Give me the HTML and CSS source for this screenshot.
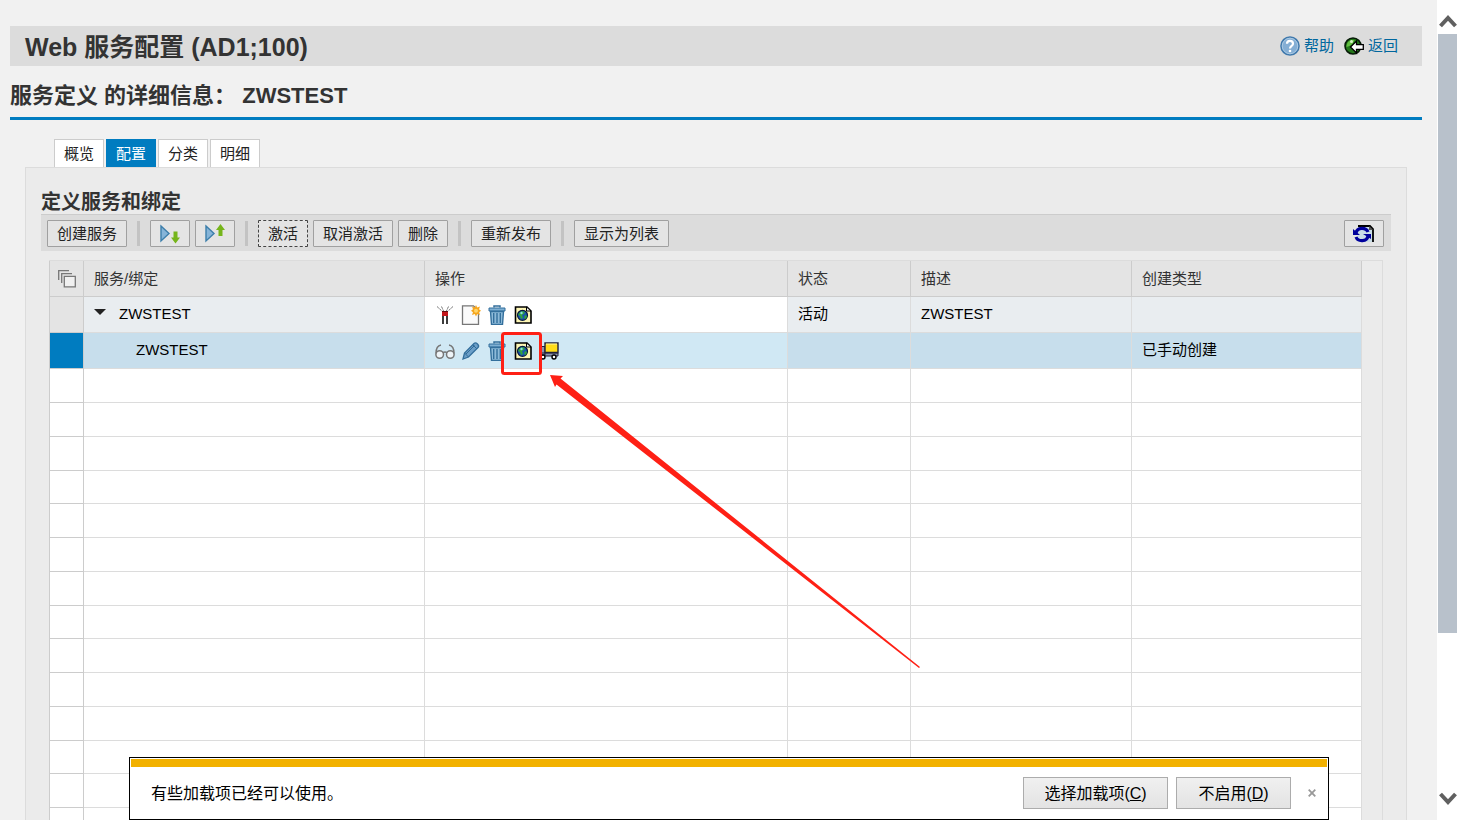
FILE: index.html
```html
<!DOCTYPE html>
<html lang="zh-CN">
<head>
    <meta charset="UTF-8">
    <meta name="viewport" content="width=device-width, initial-scale=1.0">
    <title>Web 服务配置</title>
    <link rel="stylesheet" href="styles.css">
</head>
<body>
    <!-- shared icons -->
    <svg class="icon-defs" aria-hidden="true">
        <symbol id="icon-trash" viewBox="0 0 18 20">
            <path d="M6 2.500V1h6v1.500" fill="none" stroke="#336f9c" stroke-width="1.500"/>
            <path d="M1 3h16v3H1z" fill="#7fb0d4" stroke="#336f9c"/>
            <path d="M2.500 6.500h13l-1 13h-11z" fill="#8dbad9" stroke="#336f9c" stroke-width="1.400"/>
            <path d="M5.700 8v10M9 8v10M12.300 8v10" stroke="#336f9c" stroke-width="1.400"/>
        </symbol>
        <symbol id="icon-globe" viewBox="0 0 18 18">
            <path d="M1.500 1h11.500l4 4v12H1.500z" fill="#fdf6b5" stroke="#000" stroke-width="1.600"/>
            <path d="M12.500 1v4h4.500z" fill="#fff" stroke="#000"/>
            <circle cx="8.500" cy="9.300" r="5" fill="#1756b0" stroke="#06183c" stroke-width="1.200"/>
            <path d="M5 7l3-2 3 1-1 2-2 1 1 3-2 1-1-3-2-1z" fill="#2fa13d"/>
            <path d="M11 9l2 1-1 3-2-1z" fill="#2fa13d"/>
            <circle cx="7.500" cy="7" r="1.200" fill="#8ce0e5"/>
        </symbol>
    </svg>

    <div class="window">
        <main class="page">
            <header class="title-bar">
                <h1>Web 服务配置 (AD1;100)</h1>
                <nav class="links">
                    <a href="#">
                        <svg width="20" height="20" viewBox="0 0 20 20">
                            <circle cx="10" cy="10" r="9" fill="#84aed4" stroke="#4079ac" stroke-width="1.600"/>
                            <circle cx="10" cy="10" r="7.800" fill="none" stroke="#b5d0e7" stroke-width=".8"/>
                            <path d="M7 7.700c0-3.800 6-3.800 6 0 0 2.300-3 2.200-3 4.800" fill="none" stroke="#fff" stroke-width="2.200"/>
                            <circle cx="10" cy="15" r="1.300" fill="#fff"/>
                        </svg>
                        帮助
                    </a>
                    <a href="#">
                        <svg width="20" height="18" viewBox="0 0 20 18">
                            <circle cx="9" cy="9" r="8" fill="#24781a" stroke="#071b08" stroke-width="1.600"/>
                            <path d="M2.500 10c0-5 3-7.500 8-7l-2 4-3 2z" fill="#62bd40"/>
                            <circle cx="7.500" cy="4.500" r="1.500" fill="#d9f5c8"/>
                            <path d="M6.500 10l6-6v3.700h6.800v4.600h-6.800V16z" fill="#fff" stroke="#000" stroke-width="1.300"/>
                        </svg>
                        返回
                    </a>
                </nav>
            </header>
            <h2 class="subtitle">服务定义 的详细信息： ZWSTEST</h2>

            <div class="tabs" role="tablist">
                <button class="tab" role="tab">概览</button>
                <button class="tab active" role="tab" aria-selected="true">配置</button>
                <button class="tab" role="tab">分类</button>
                <button class="tab" role="tab">明细</button>
            </div>

            <section class="panel">
                <h3>定义服务和绑定</h3>
                <div class="toolbar">
                    <button class="btn">创建服务</button>
                    <span class="sep"></span>
                    <button class="btn btn-icon" aria-label="展开">
                        <svg width="20" height="20" viewBox="0 0 20 20">
                            <path d="M1 2l8 7.500L1 17z" fill="#86b4d8" stroke="#3c7eab" stroke-width="1.400"/>
                            <path d="M13.500 7.500h4v6H20l-4.500 6-4.500-6h2.500z" fill="#76b51b"/>
                        </svg>
                    </button>
                    <button class="btn btn-icon" aria-label="折叠">
                        <svg width="20" height="20" viewBox="0 0 20 20">
                            <path d="M1 2l8 7.500L1 17z" fill="#86b4d8" stroke="#3c7eab" stroke-width="1.400"/>
                            <path d="M13.500 12h4V6H20l-4.500-6L11 6h2.500z" fill="#76b51b"/>
                        </svg>
                    </button>
                    <span class="sep"></span>
                    <button class="btn focused">激活</button>
                    <button class="btn">取消激活</button>
                    <button class="btn">删除</button>
                    <span class="sep"></span>
                    <button class="btn">重新发布</button>
                    <span class="sep"></span>
                    <button class="btn">显示为列表</button>
                    <button class="btn btn-icon refresh" aria-label="刷新">
                        <svg width="22" height="18" viewBox="0 0 22 18">
                            <path d="M5 1h12l4 4v12H5z" fill="#c9dde7"/>
                            <path d="M5 1h12l3 3v13" fill="none" stroke="#000" stroke-width="1.800"/>
                            <path d="M16 1l4 4h-4z" fill="#555"/>
                            <path d="M3 8c1-6 10-6 12-1M15 11c-1 6-10 6-12 1" fill="none" stroke="#00009c" stroke-width="3.200"/>
                            <path d="M0 4v6h7zM18 14V9h-8z" fill="#00009c"/>
                        </svg>
                    </button>
                </div>

                <div class="grid-wrap">
                    <table class="grid">
                        <colgroup>
                            <col class="col-select">
                            <col>
                            <col class="col-actions">
                            <col class="col-status">
                            <col class="col-desc">
                            <col class="col-type">
                        </colgroup>
                        <thead>
                            <tr>
                                <th class="select-all">
                                    <svg width="18" height="18" viewBox="0 0 18 18" fill="none" stroke="#777" stroke-width="1.300">
                                        <path d="M.7 10V.7H11M3.700 13V3.700H14"/>
                                        <path d="M6.300 6.300h11v10.500h-11z" fill="#f0f0f0"/>
                                    </svg>
                                </th>
                                <th>服务/绑定</th>
                                <th>操作</th>
                                <th>状态</th>
                                <th>描述</th>
                                <th>创建类型</th>
                            </tr>
                        </thead>
                        <tbody id="rows">
                            <tr class="parent">
                                <td></td>
                                <td><span class="caret"></span>ZWSTEST</td>
                                <td class="actions">
                                    <div class="icons">
                                        <svg height="20" viewBox="0 0 18 20" fill="none">
                                            <path d="M1 1.500l6 5.500M5.500 1.500L8 7M12.500 1.500L10 7M17 1.500L11 7" stroke="#777" stroke-dasharray="2.500 .7"/>
                                            <path d="M7 10v9M11 10v9" stroke="#333" stroke-width="1.900"/>
                                            <path d="M6 6.500h6V11H6z" fill="#c2161b"/>
                                            <path d="M6 6.500h6" stroke="#5c0d10"/>
                                        </svg>
                                        <svg height="20" viewBox="0 0 20 20">
                                            <path d="M1.500 .8h11l5 5v13.500h-16z" fill="#fafafa" stroke="#777" stroke-width="1.300"/>
                                            <path d="M15 0l1.200 2.500 2.800-1-1 2.800 2 1.500-2 1.400 1 2.800-2.800-1L15 11.500 13.800 9 11 10l1-2.800-2-1.400 2-1.500-1-2.800 2.800 1z" fill="#f7a61c"/>
                                            <circle cx="15" cy="5.700" r="2" fill="#ffd66b"/>
                                        </svg>
                                        <svg height="20"><use href="#icon-trash"/></svg>
                                        <svg height="18"><use href="#icon-globe"/></svg>
                                    </div>
                                </td>
                                <td>活动</td>
                                <td>ZWSTEST</td>
                                <td></td>
                            </tr>
                            <tr class="selected">
                                <td></td>
                                <td class="child">ZWSTEST</td>
                                <td class="actions">
                                    <div class="icons">
                                        <svg height="20" viewBox="0 0 20 20" fill="none" stroke="#777" stroke-width="1.500">
                                            <circle cx="4.700" cy="13.500" r="3.800" fill="#eef4f8"/>
                                            <circle cx="15.300" cy="13.500" r="3.800" fill="#eef4f8"/>
                                            <path d="M8 12c1-1.500 3-1.500 4 0M1 12.500C1 8 2.500 4.500 6 4M19 12.500C19 8 17.500 4.500 14 4"/>
                                        </svg>
                                        <svg height="20" viewBox="0 0 18 20">
                                            <path d="M1 18l1.500-6L12 2.500c2-2 6 2 4 4L6.500 16z" fill="#6c9fc8" stroke="#336f9c" stroke-width="1.300"/>
                                            <path d="M4 13L12.500 4.500M2.500 12l4 4M11 4l4 4" stroke="#2f6b97"/>
                                        </svg>
                                        <svg height="20"><use href="#icon-trash"/></svg>
                                        <svg height="18"><use href="#icon-globe"/></svg>
                                        <svg height="18" viewBox="0 0 20 18">
                                            <path d="M0 4.500h6V13H0zM0 11h19v3H0z" fill="#8c94ae" stroke="#22223a"/>
                                            <path d="M6 1h13v9.500H6z" fill="#ffdc18" stroke="#22223a" stroke-width="1.400"/>
                                            <path d="M7 2h11" stroke="#fff3a0"/>
                                            <circle cx="4" cy="15" r="2" fill="#fff" stroke="#000" stroke-width="1.400"/>
                                            <circle cx="15" cy="15" r="2" fill="#fff" stroke="#000" stroke-width="1.400"/>
                                        </svg>
                                    </div>
                                </td>
                                <td></td>
                                <td></td>
                                <td>已手动创建</td>
                            </tr>
                        </tbody>
                    </table>
                    <svg class="callout" width="420" height="340" viewBox="0 0 420 340">
                        <rect x="1.500" y="1.500" width="38" height="40" rx="2" fill="none" stroke="#fe2015" stroke-width="3"/>
                        <path d="M49 43l13 1-2.500 2.500L419 335l-1 1L55.500 52.500 54 55z" fill="#fe2015"/>
                    </svg>
                </div>
            </section>
        </main>

        <div class="scrollbar">
            <svg width="18" height="34" viewBox="0 0 18 34"><path d="M1.500 26L9 18l7.500 8" fill="none" stroke="#606060" stroke-width="4"/></svg>
            <div class="track"><div class="thumb"></div></div>
            <svg width="18" height="34" viewBox="0 0 18 34"><path d="M1.500 8L9 16l7.500-8" fill="none" stroke="#606060" stroke-width="4"/></svg>
        </div>
    </div>

    <div class="notice">
        <div class="notice-body">
            <p>有些加载项已经可以使用。</p>
            <button class="notice-btn wide">选择加载项(<u>C</u>)</button>
            <button class="notice-btn">不启用(<u>D</u>)</button>
            <button class="close" aria-label="关闭">
                <svg width="8" height="8" viewBox="0 0 8 8"><path d="M.7.7l6.600 6.600M7.300.7L.7 7.300" stroke="#999" stroke-width="1.800"/></svg>
            </button>
        </div>
    </div>

    <script>
        // fill the rest of the grid with empty rows
        let rows = document.getElementById('rows');
        for (let i = 0; i < 14; i++) {
            let tr = document.createElement('tr');
            tr.classList.add('empty');
            tr.innerHTML = '<td></td>'.repeat(6);
            rows.appendChild(tr);
        }
    </script>
</body>
</html>
```
FILE: styles.css
```css
* {
    box-sizing: border-box;
}
body {
    margin: 0;
    height: 100vh;
    overflow: hidden;
    background: #f1f1f1;
    color: #333;
    font-family: "Liberation Sans", Arial, "Noto Sans CJK SC", sans-serif;
    font-size: 15px;
}
button {
    font: inherit;
    color: #222;
    padding: 0;
    cursor: pointer;
}
svg {
    display: block;
    flex: none;
}
.icon-defs {
    position: absolute;
    width: 0;
    height: 0;
}
.window {
    display: flex;
    height: 100vh;
}
.page {
    flex: 1;
    min-width: 0;
    overflow: hidden;
    padding: 26px 15px 0 10px;
}

/* header */
.title-bar {
    display: flex;
    justify-content: space-between;
    align-items: center;
    height: 40px;
    padding: 0 24px 0 15px;
    background: #dcdcdc;
}
h1, h2, h3 {
    margin: 0;
    font-weight: bold;
    white-space: nowrap;
}
h1 {
    padding-top: 2px;
    font-size: 25px;
    line-height: 38px;
}
.links {
    display: flex;
    gap: 10px;
}
.links a {
    display: flex;
    align-items: center;
    gap: 4px;
    color: #00679e;
    text-decoration: none;
    line-height: 20px;
}
.subtitle {
    height: 54px;
    font-size: 22px;
    line-height: 60px;
    border-bottom: 3px solid #007cc0;
}

/* tabs */
.tabs {
    display: flex;
    gap: 2px;
    padding: 19px 0 0 44px;
}
.tab {
    width: 50px;
    height: 28px;
    padding-bottom: 2px;
    background: #fff;
    border: 1px solid #ccc;
    border-bottom: none;
}
.tab.active {
    background: #007cc0;
    border-color: #007cc0;
    color: #fff;
}
.panel {
    margin: 0 15px;
    padding: 22px 15px 0;
    background: #ebebeb;
    border: 1px solid #dcdcdc;
}
h3 {
    font-size: 20px;
    line-height: 24px;
}

/* toolbar */
.toolbar {
    display: flex;
    align-items: center;
    gap: 5px;
    height: 37px;
    padding: 1px 7px 0 6px;
    background: #dcdcdc;
    border-top: 1px solid #ccc;
}
.btn {
    height: 27px;
    padding: 0 9px;
    line-height: 25px;
    background: #e4e4e4;
    border: 1px solid #a0a0a0;
    border-radius: 1px;
    white-space: nowrap;
}
.btn-icon {
    display: flex;
    justify-content: center;
    align-items: center;
    width: 40px;
    padding: 0;
}
.btn.focused {
    border: 1px dashed #444;
}
.refresh {
    margin-left: auto;
}
.sep {
    width: 3px;
    height: 25px;
    margin: 0 5px;
    background: #c3c3c3;
}

/* grid */
.grid-wrap {
    position: relative;
    margin: 9px 8px 0;
    padding-right: 20px;
    border: 1px solid #dcdcdc;
    border-left: none;
}
.grid {
    width: 100%;
    table-layout: fixed;
    border-collapse: separate;
    border-spacing: 0;
    background: #fff;
    border-left: 1px solid #ccc;
}
.col-select { width: 34px; }
.col-actions { width: 363px; }
.col-status { width: 123px; }
.col-desc { width: 221px; }
.col-type { width: 230px; }
.grid th, .grid td {
    height: 36px;
    padding: 0 10px;
    border-right: 1px solid #dcdcdc;
    border-bottom: 1px solid #dcdcdc;
    text-align: left;
    line-height: 20px;
}
.grid th {
    font-weight: normal;
    background: #e4e4e4;
    border-color: #ccc;
}
.grid td:first-child {
    border-color: #ccc;
}
.grid th.select-all {
    padding: 0 8px;
}
.grid td {
    padding-bottom: 2px;
    color: #000;
}
.parent td {
    background: #e9edf0;
}
.parent td:first-child {
    background: #e4e4e4;
}
.parent td.actions {
    background: #fff;
}
.selected td {
    background: #c7deec;
}
.selected td:first-child {
    background: #007cc0;
}
.selected td.actions {
    background: #d0e8f4;
}
.grid td.actions {
    padding-bottom: 0;
}
.grid td.child {
    padding-left: 52px;
}
.grid .empty td {
    height: 34px;
}
.grid .empty:nth-child(4n+2) td {
    height: 33px;
}
.caret {
    display: inline-block;
    margin-right: 13px;
    border: 6px solid transparent;
    border-top-color: #222;
    border-bottom: none;
    vertical-align: 4px;
}
.icons {
    display: flex;
    align-items: center;
    gap: 6px;
}
.icons svg {
    width: 20px;
}
.callout {
    position: absolute;
    left: 452px;
    top: 71px;
    pointer-events: none;
}

/* scrollbar */
.scrollbar {
    display: flex;
    flex-direction: column;
    align-items: center;
    width: 21px;
    background: #fff;
}
.track {
    flex: 1;
    width: 19px;
}
.thumb {
    height: 79.6%;
    background: #b8c1cb;
}

/* notification bar */
.notice {
    position: fixed;
    left: 0;
    right: 0;
    bottom: 0;
    max-width: 1200px;
    margin: 0 auto;
    padding: 1px;
    background: #fff;
    border: 1px solid #000;
    color: #000;
    font-size: 16px;
}
.notice-body {
    display: flex;
    align-items: center;
    gap: 8px;
    height: 59px;
    padding: 0 2px 0 20px;
    border-top: 8px solid #f2b100;
}
.notice p {
    flex: 1;
    margin: 0;
    padding-bottom: 2px;
}
.notice-btn {
    width: 115px;
    height: 32px;
    padding-bottom: 2px;
    background: linear-gradient(#f0f0f0, #e3e3e3);
    border: 1px solid #acacac;
    color: #000;
}
.notice-btn.wide {
    width: 145px;
}
.close {
    display: flex;
    justify-content: center;
    width: 26px;
    background: none;
    border: none;
}
```
